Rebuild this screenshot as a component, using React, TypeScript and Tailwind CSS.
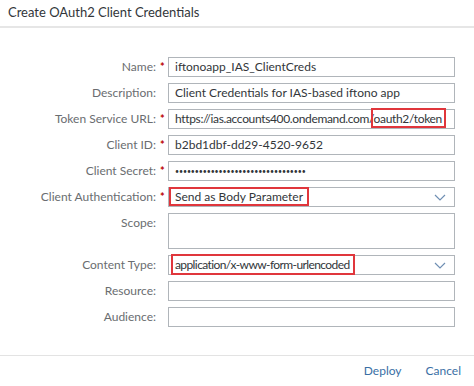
import { ReactNode } from "react";

const font = { fontFamily: "Lato, 'Liberation Sans', sans-serif" };

function Chevron() {
  return (
    <svg width="12" height="7" viewBox="0 0 12 7" className="shrink-0">
      <polyline points="1,1 6,6 11,1" fill="none" stroke="#6f8fb3" strokeWidth="1.2" />
    </svg>
  );
}

function Marked({ children, className }: { children: ReactNode; className: string }) {
  return (
    <span className="relative">
      {children}
      <span className={"pointer-events-none absolute border-2 border-[#e0363c] " + className} />
    </span>
  );
}

function Row({
  label,
  required,
  tall,
  children,
}: {
  label: string;
  required?: boolean;
  tall?: boolean;
  children?: ReactNode;
}) {
  return (
    <div className="flex items-start">
      <div className="flex h-[20px] w-[168px] items-center justify-end pr-[3px] text-[12px] text-[#6a6d70]">
        <span>{label}</span>
        <span className="w-[9px] pl-[4px] text-[11px] font-bold text-[#bb0000]">{required ? "*" : ""}</span>
      </div>
      <div
        className={
          "flex w-[287px] items-center border border-[#b0b5ba] bg-white pl-[6px] pr-[8px] text-[12px] text-[#32363a] " +
          (tall ? "h-[36px]" : "h-[20px]")
        }
      >
        {children}
      </div>
    </div>
  );
}

export default function App() {
  return (
    <div className="flex h-[386px] w-[474px] flex-col bg-white" style={font}>
      <div className="flex h-[28px] items-center border-b-2 border-[#e6e6e6] pl-[8px] text-[13px] text-[#32363a]">
        Create OAuth2 Client Credentials
      </div>
      <div className="flex flex-col gap-[6px] pt-[29px]">
        <Row label="Name:" required>iftonoapp_IAS_ClientCreds</Row>
        <Row label="Description:">Client Credentials for IAS-based iftono app</Row>
        <Row label="Token Service URL:" required>
          <span className="whitespace-nowrap tracking-[-0.35px]">
            https://ias.accounts400.ondemand.com/
            <Marked className="-left-[3px] -right-[4px] -top-[3px] -bottom-[2px]">oauth2/token</Marked>
          </span>
        </Row>
        <Row label="Client ID:" required>b2bd1dbf-dd29-4520-9652</Row>
        <Row label="Client Secret:" required>
          <span className="text-[7px] tracking-[-0.1px]">{"•".repeat(33)}</span>
        </Row>
        <Row label="Client Authentication:" required>
          <span className="flex-1">
            <Marked className="-left-[6px] -right-[6px] -top-[2px] -bottom-[2px]">Send as Body Parameter</Marked>
          </span>
          <Chevron />
        </Row>
        <Row label="Scope:" tall />
        <Row label="Content Type:">
          <span className="flex-1 tracking-[-0.6px]">
            <Marked className="-left-[4px] -right-[5px] -top-[3px] -bottom-[3px]">application/x-www-form-urlencoded</Marked>
          </span>
          <Chevron />
        </Row>
        <Row label="Resource:" />
        <Row label="Audience:" />
      </div>
      <div className="flex-1" />
      <div className="flex h-[31px] items-center justify-end gap-[24px] border-t border-[#e3e3e3] pr-[13px] text-[12px] text-[#3a6fa5]">
        <span>Deploy</span>
        <span>Cancel</span>
      </div>
    </div>
  );
}
